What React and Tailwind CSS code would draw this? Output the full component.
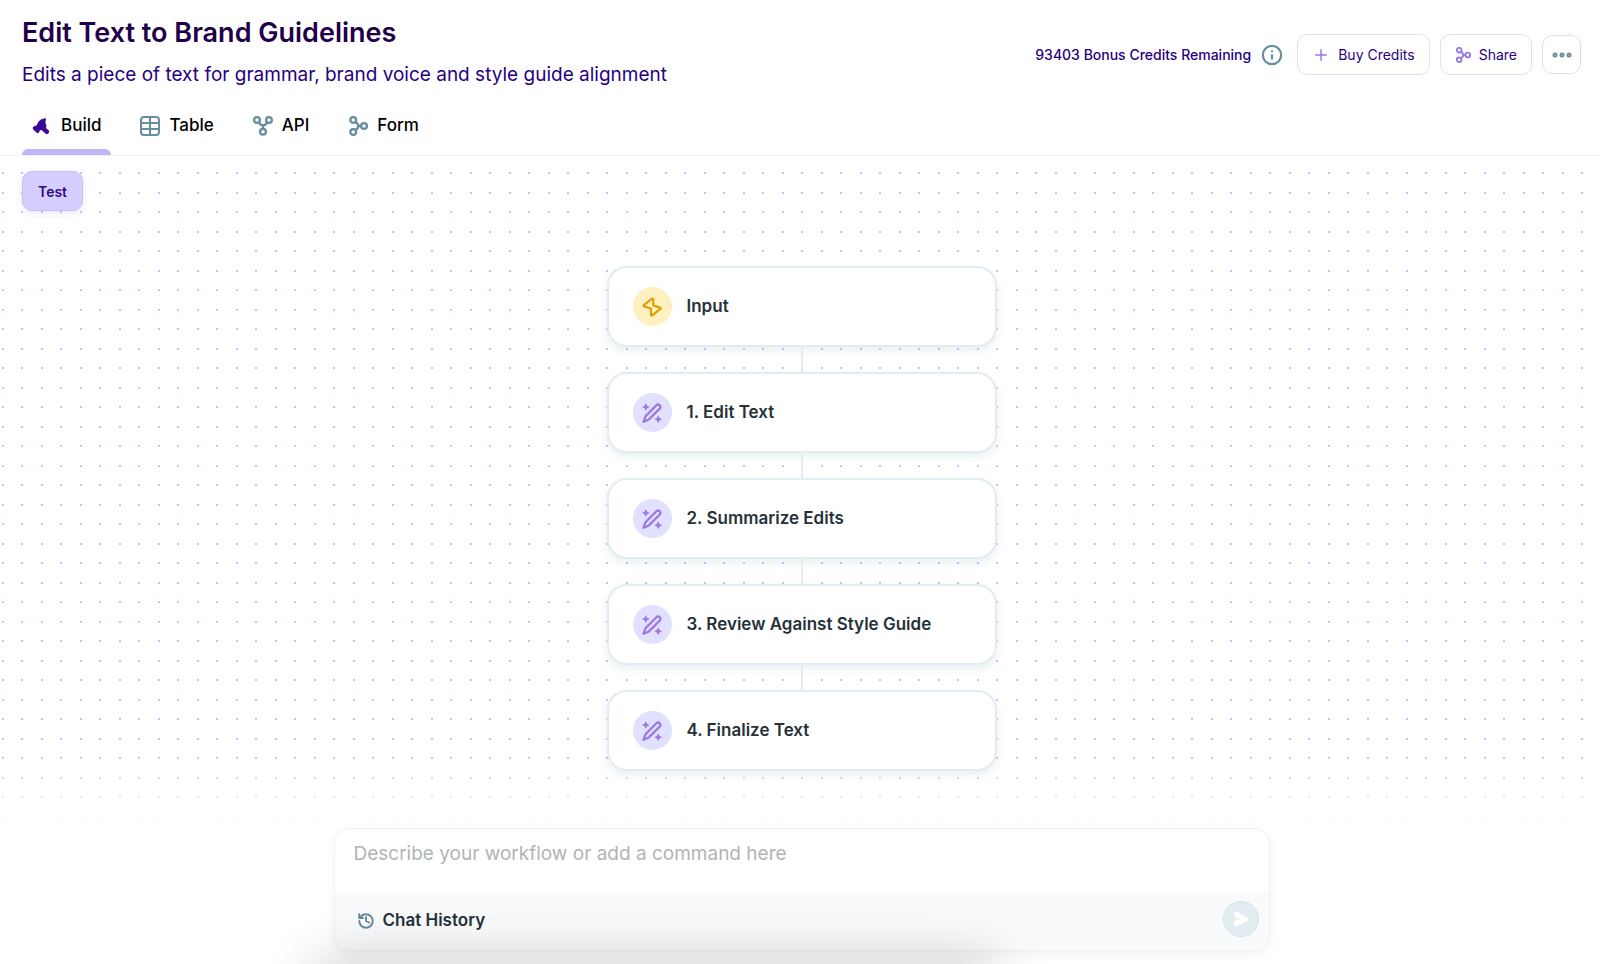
import { Ellipsis, History, Info, Plus } from "lucide-react";

const steps = [
  { title: "Input", kind: "input" },
  { title: "1. Edit Text", kind: "edit" },
  { title: "2. Summarize Edits", kind: "edit" },
  { title: "3. Review Against Style Guide", kind: "edit" },
  { title: "4. Finalize Text", kind: "edit" },
];

const tabs = [
  { label: "Build", icon: HammerIcon, active: true },
  { label: "Table", icon: TableIcon },
  { label: "API", icon: ApiIcon },
  { label: "Form", icon: ShareIcon },
];

function HammerIcon() {
  return (
    <svg viewBox="0 0 20 20" className="w-5 h-5 text-[#3b0a94]" fill="currentColor">
      <path d="M1.600 10.600 4.400 9.400 6.600 5.600Q8.800 2.600 13 2.300q1.400 0 1.100.9-1.200 2.300-.3 4.600l.6 2.200q.3 1.200-.6 2l2.600 2q1.500 1.200.5 2.600l-.7.900q-1.200 1.200-2.700.1l-4.100-3.700-1.600.6-.7 1.700q-.9 1.500-2.400.5L1 13.200q-1-1.500.6-2.600z" />
    </svg>
  );
}

function TableIcon() {
  return (
    <svg viewBox="0 0 20 20" className="w-5 h-5 text-[#678d9e]" fill="none" stroke="currentColor" strokeWidth="2">
      <rect x="1" y="1" width="18" height="18" rx="3" />
      <path d="M10 1v18M1 7h18M1 13h18" />
    </svg>
  );
}

function ApiIcon() {
  return (
    <svg viewBox="0 0 20 20" className="w-5 h-5 text-[#678d9e]" fill="none" stroke="currentColor" strokeWidth="2.3">
      <circle cx="4" cy="4" r="2.9" />
      <circle cx="16" cy="4" r="2.9" />
      <circle cx="10" cy="15.8" r="2.9" />
      <path d="M6 6.200Q7 9.500 10 9.500q3 0 4-3.300M10 9.500v3.500" />
    </svg>
  );
}

function ShareIcon({ className = "w-5 h-5 text-[#678d9e]" }) {
  return (
    <svg viewBox="0 0 20 20" className={className} fill="none" stroke="currentColor" strokeWidth="2.3">
      <circle cx="5.2" cy="4" r="2.9" />
      <circle cx="5.2" cy="16" r="2.9" />
      <circle cx="16" cy="10" r="2.9" />
      <path d="M7.200 6.200Q10.200 7 10.200 10t-3 3.800M10.200 10h3" />
    </svg>
  );
}

function BoltIcon() {
  return (
    <svg viewBox="0 0 20 20" className="w-5 h-5 text-[#dfa000]" fill="none" stroke="currentColor" strokeWidth="2.2" strokeLinejoin="round">
      <path d="M9.600 2 1.800 8.200q-.8.9.3 1.300L9 11.600v6.200q.2 1.300 1.300.6l8-6.500q.8-.9-.3-1.300L11.300 8.400V2.500q-.3-1.300-1.700-.5z" />
    </svg>
  );
}

function PenSparkIcon() {
  return (
    <svg viewBox="0 0 20 20" className="w-5 h-5 text-[#9a78e4]" fill="none" stroke="currentColor" strokeWidth="2.2" strokeLinejoin="round">
      <path d="M1.400 18.800 3.600 13.100 14.400 2.300a2.300 2.300 0 0 1 3.300 3.300L6.900 16.400z" />
      <path
        d="M3.800 1.200 4.600 3.200l2 .8-2 .8-.8 2-.8-2-2-.8 2-.8zM16.200 13.400l.8 2 2 .8-2 .8-.8 2-.8-2-2-.8 2-.8z"
        fill="currentColor"
        strokeWidth="1.2"
      />
    </svg>
  );
}

function SendIcon() {
  return (
    <svg viewBox="0 0 16 16" className="w-4 h-4" fill="#fff">
      <path d="M.8 3.600C.3 1.400 1.900.1 3.900.8l10 5.100c1.800 1 1.800 3.200 0 4.200l-10 5.100C1.900 15.900.3 14.600.8 12.400Q1.500 9.200 4.200 8.600H6.500q.6-.6 0-1.200H4.200Q1.500 6.800.8 3.600z" />
    </svg>
  );
}

function StepCard({ step }) {
  const isInput = step.kind === "input";

  return (
    <button className="w-full h-[81px] flex items-center gap-[15px] pl-6 bg-white rounded-[20px] border-2 border-[#e2ecf1] shadow-[0_4px_10px_rgba(96,141,158,0.14)] text-left">
      <span
        className={
          isInput
            ? "w-[39px] h-[39px] rounded-full flex items-center justify-center bg-[#fff0c2]"
            : "w-[39px] h-[39px] rounded-full flex items-center justify-center bg-[#e1e0fe]"
        }
      >
        {isInput ? <BoltIcon /> : <PenSparkIcon />}
      </span>
      <span className="text-[17px] font-semibold text-[#263238]">{step.title}</span>
    </button>
  );
}

export default function App() {
  return (
    <div className="min-h-screen flex flex-col bg-white font-['Inter',sans-serif] overflow-hidden">
      <header className="border-b border-[#eef4f5]">
        <div className="flex items-start justify-between pl-[22px] pr-[19px] pt-[17px]">
          <div>
            <h1 className="text-[27px] leading-8 font-semibold text-[#210049]">
              Edit Text to Brand Guidelines
            </h1>
            <p className="mt-3 text-[19px] leading-7 text-[#27007f]">
              Edits a piece of text for grammar, brand voice and style guide alignment
            </p>
          </div>

          <div className="flex items-center gap-[10px] pt-[17px] text-[14px] text-[#27007f]">
            <span className="font-medium">93403 Bonus Credits Remaining</span>
            <Info className="w-[22px] h-[22px] mr-1 text-[#678d9e]" strokeWidth={2.4} />
            <button className="h-[41px] px-[14px] flex items-center gap-2 border border-[#e0dcff] rounded-[10px]">
              <Plus className="w-[18px] h-[18px] text-[#9a78e4]" />
              Buy Credits
            </button>
            <button className="h-[41px] px-[14px] flex items-center gap-2 border border-[#e0dcff] rounded-[10px]">
              <ShareIcon className="w-4 h-4 text-[#9a78e4]" />
              Share
            </button>
            <button
              aria-label="More options"
              className="w-[39px] h-[39px] flex items-center justify-center border border-[#e0dcff] rounded-[10px]"
            >
              <Ellipsis className="w-6 h-6 text-[#678d9e]" strokeWidth={3} />
            </button>
          </div>
        </div>

        <nav className="flex gap-[19px] pl-[22px] mt-[14px]">
          {tabs.map((tab) => (
            <a key={tab.label} href="#" className="flex flex-col">
              <span className="h-[46px] px-[10px] flex items-center gap-[9px] text-[17px] font-medium text-black">
                <tab.icon />
                {tab.label}
              </span>
              <span className={tab.active ? "h-[6px] rounded-t-[6px] bg-[#c1b6f3]" : "h-[6px]"} />
            </a>
          ))}
        </nav>
      </header>

      <main className="grow flex flex-col relative pl-[3px]">
        {/* dot grid, fading out above the prompt box */}
        <div className="absolute inset-x-0 top-0 h-[670px] bg-[radial-gradient(circle_at_3px_17px,#cbc0fa_1px,transparent_1px),radial-gradient(circle_at_22px_17px,#cbc0fa_1px,transparent_1px),radial-gradient(circle_at_3px_37px,#cbc0fa_1px,transparent_1px),radial-gradient(circle_at_22px_37px,#cbc0fa_1px,transparent_1px)] bg-size-[39px_39px] mask-[linear-gradient(#000_600px,transparent_670px)]" />

        <div className="relative pl-[19px] pt-[15px]">
          <button className="h-10 px-[15px] rounded-[10px] border border-[#c7bdf5] bg-[#d5cefe] text-[14px] font-semibold text-[#2e0a85] shadow-[0_2px_8px_rgba(96,141,158,0.18)]">
            Test
          </button>
        </div>

        <div className="relative w-[390px] mx-auto mt-[55px] flex flex-col items-center">
          {steps.map((step, i) => (
            <div key={step.title} className="w-full flex flex-col items-center">
              {i > 0 && <span className="w-[2px] h-[25px] bg-[#e2ecf1]" />}
              <StepCard step={step} />
            </div>
          ))}
        </div>

        <form className="relative w-[936px] mx-auto mt-[57px] mb-[14px] rounded-[16px] border border-[#edf3f5] bg-white shadow-[0_4px_12px_rgba(0,0,0,0.05)] overflow-hidden">
          <textarea
            aria-label="Workflow prompt"
            rows={1}
            placeholder="Describe your workflow or add a command here"
            className="block w-full h-[64px] px-[19px] pt-[11px] resize-none outline-none text-[19px] leading-7 placeholder:text-[#b0b4b7]"
          />
          <div className="h-[57px] flex items-start justify-between pt-2 pl-[22px] pr-[10px] bg-[#f8fafc]">
            <button type="button" className="h-10 flex items-center gap-2 text-[17px] font-semibold text-[#263238]">
              <History className="w-[18px] h-[18px] text-[#678d9e]" strokeWidth={2.6} />
              Chat History
            </button>
            <button
              type="submit"
              aria-label="Send"
              className="w-9 h-9 flex items-center justify-center rounded-full bg-[#e2ecf1] border border-[#d6e2e7]"
            >
              <SendIcon />
            </button>
          </div>
        </form>

        {/* soft shadow rising from below the fold */}
        <div className="absolute -bottom-[60px] left-[20%] right-[38%] h-[60px] rounded-[20px] shadow-[0_0_50px_10px_rgba(0,0,0,0.16)] pointer-events-none" />
      </main>
    </div>
  );
}
